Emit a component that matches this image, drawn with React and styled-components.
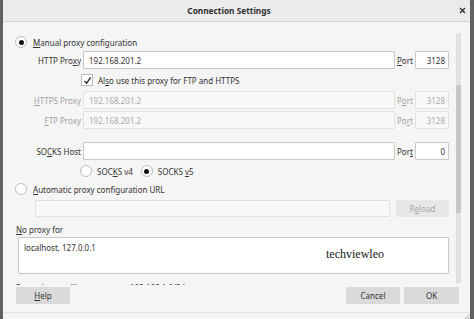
import React from 'react';
import styled, { createGlobalStyle } from 'styled-components';

const font = `"Noto Sans", "Open Sans", sans-serif`;

const GlobalStyle = createGlobalStyle`
  html, body {
    margin: 0;
    padding: 0;
    background: #5f5f5f;
  }
  * {
    box-sizing: border-box;
  }
`;

const Frame = styled.div`
  position: relative;
  width: 474px;
  height: 319px;
  display: flex;
  flex-direction: column;
  overflow: hidden;
  background: #f5f5f5;
  border-left: 3px solid #616161;
  border-right: 4px solid #616161;
  font-family: ${font};
  font-size: 8px;
  color: #333;
`;

const TitleBar = styled.div`
  display: flex;
  align-items: center;
  height: 22px;
  flex-shrink: 0;
  background: #ebebeb;
  border-bottom: 1px solid #d5d5d5;
`;

const Title = styled.div`
  flex: 1;
  text-align: center;
  font-weight: bold;
  font-size: 8.3px;
  color: #2e2e2e;
`;

const CloseBox = styled.div`
  width: 15px;
  display: flex;
  justify-content: center;
  padding-right: 1px;
`;

const ScrollArea = styled.div`
  display: flex;
  height: 263px;
  flex-shrink: 0;
  overflow: hidden;
`;

const Content = styled.div`
  flex: 1;
  display: flex;
  flex-direction: column;
  padding: 14px 7px 0 12px;
`;

const ScrollTrack = styled.div`
  width: 5px;
  margin: 11px 9px 2px 0;
  background: #e2e2e2;
  display: flex;
  flex-direction: column;
  padding-top: 52px;
`;

const ScrollThumb = styled.div`
  height: 128px;
  background: #c7c7c7;
`;

const OptionRow = styled.div`
  display: flex;
  align-items: center;
  gap: 6px;
  height: 14px;
  margin-top: ${(p) => p.$top ?? 0}px;
`;

const Radio = styled.span`
  width: 12px;
  height: 12px;
  border-radius: 50%;
  border: 1px solid #bdbdbd;
  background: #fff;
  display: flex;
  align-items: center;
  justify-content: center;
  flex-shrink: 0;

  &::after {
    content: '';
    width: 5px;
    height: 5px;
    border-radius: 50%;
    background: ${(p) => (p.$checked ? '#111' : 'transparent')};
  }
`;

const Check = styled.span`
  width: 12px;
  height: 12px;
  border: 1px solid #bdbdbd;
  background: #fff;
  display: flex;
  align-items: center;
  justify-content: center;
  flex-shrink: 0;
`;

const Mn = styled.span`
  text-decoration: underline;
  text-underline-offset: 1px;
`;

const FieldGrid = styled.div`
  display: grid;
  grid-template-columns: 66px 1fr 16px 34px;
  grid-auto-rows: 18px;
  column-gap: 2px;
  row-gap: 2px;
  margin-top: ${(p) => p.$top}px;
  align-items: center;
`;

const FieldLabel = styled.div`
  text-align: right;
  white-space: nowrap;
  color: ${(p) => (p.$disabled ? '#a3a3a3' : '#333')};
`;

const PortLabel = styled.div`
  white-space: nowrap;
  color: ${(p) => (p.$disabled ? '#a3a3a3' : '#333')};
`;

const TextInput = styled.input`
  width: 100%;
  height: ${(p) => p.$h ?? 18}px;
  margin: 0;
  padding: 0 ${(p) => (p.$right ? 3 : 5)}px;
  font-family: ${font};
  font-size: 8px;
  text-align: ${(p) => (p.$right ? 'right' : 'left')};
  color: #333;
  background: #fff;
  border: 1px solid #c9c9c9;
  border-radius: 1px;
  outline: none;

  &:disabled {
    color: #ababab;
    background: #f8f8f8;
    border-color: #e1e1e1;
  }
`;

const CheckCell = styled.div`
  grid-column: 2 / 5;
  display: flex;
  align-items: center;
  gap: 5px;
  margin-left: -2px;
  align-self: stretch;
`;

const VersionCell = styled.div`
  grid-column: 2 / 5;
  display: flex;
  align-items: center;
  gap: 8px;
  margin-left: -3px;
  height: 16px;
`;

const RadioOption = styled.div`
  display: flex;
  align-items: center;
  gap: 5px;
`;

const UrlRow = styled.div`
  display: flex;
  gap: 6px;
  height: 17px;
  margin-top: 5px;
  padding-left: 20px;
`;

const Button = styled.button`
  width: ${(p) => p.$w ?? 54}px;
  height: 17px;
  flex-shrink: 0;
  margin: 0;
  padding: 0;
  font-family: ${font};
  font-size: 8px;
  color: ${(p) => (p.disabled ? '#a9a9a9' : '#333')};
  background: ${(p) => (p.disabled ? '#e7e7e7' : '#dadada')};
  border: none;
  border-radius: 1px;
  margin-left: ${(p) => (p.$push ? 'auto' : '0')};
`;

const SectionLabel = styled.div`
  height: 14px;
  display: flex;
  align-items: center;
  margin-top: ${(p) => p.$top}px;
  padding-left: 1px;
  white-space: nowrap;
`;

const AreaWrap = styled.div`
  position: relative;
  margin: 2px 0 0 3px;
  height: 37px;
  flex-shrink: 0;
`;

const TextArea = styled.textarea`
  display: block;
  width: 100%;
  height: 100%;
  margin: 0;
  padding: 4px 5px;
  resize: none;
  font-family: ${font};
  font-size: 8px;
  color: #333;
  background: #fff;
  border: 1px solid #c9c9c9;
  border-radius: 1px;
  outline: none;
`;

const Watermark = styled.span`
  position: absolute;
  left: 308px;
  top: 10px;
  font-family: "Liberation Serif", "Times New Roman", serif;
  font-size: 12px;
  color: #151515;
  pointer-events: none;
`;

const Example = styled.div`
  margin-top: 8px;
  padding-left: 1px;
  white-space: nowrap;
  line-height: 11px;
  flex-shrink: 0;
`;

const ButtonBar = styled.div`
  flex: 1;
  display: flex;
  align-items: flex-start;
  gap: 4px;
  padding: 2px 11px 0 13px;
  border-bottom: 1px solid #e4e4e4;
  margin-bottom: 6px;
`;

const Grip = styled.svg`
  position: absolute;
  right: -4px;
  bottom: 0;
`;

const App = () => (
  <>
    <GlobalStyle />
    <Frame>
      <TitleBar>
        <Title>Connection Settings</Title>
        <CloseBox>
          <svg width="7" height="7" viewBox="0 0 7 7">
            <path d="M1 1 L6 6 M6 1 L1 6" stroke="#2e2e2e" strokeWidth="1.3" />
          </svg>
        </CloseBox>
      </TitleBar>

      <ScrollArea>
        <Content>
          <OptionRow>
            <Radio $checked />
            <span><Mn>M</Mn>anual proxy configuration</span>
          </OptionRow>

          <FieldGrid $top={3}>
            <FieldLabel>HTTP Pro<Mn>x</Mn>y</FieldLabel>
            <TextInput defaultValue="192.168.201.2" readOnly />
            <PortLabel><Mn>P</Mn>ort</PortLabel>
            <TextInput $right defaultValue="3128" readOnly />

            <CheckCell>
              <Check>
                <svg width="9" height="9" viewBox="0 0 9 9">
                  <path d="M1.5 5 L3.6 7.3 L7.6 1.3" fill="none" stroke="#222" strokeWidth="1.3" />
                </svg>
              </Check>
              <span>Al<Mn>s</Mn>o use this proxy for FTP and HTTPS</span>
            </CheckCell>

            <FieldLabel $disabled><Mn>H</Mn>TTPS Proxy</FieldLabel>
            <TextInput disabled defaultValue="192.168.201.2" />
            <PortLabel $disabled>P<Mn>o</Mn>rt</PortLabel>
            <TextInput $right disabled defaultValue="3128" />

            <FieldLabel $disabled><Mn>F</Mn>TP Proxy</FieldLabel>
            <TextInput disabled defaultValue="192.168.201.2" />
            <PortLabel $disabled>Po<Mn>r</Mn>t</PortLabel>
            <TextInput $right disabled defaultValue="3128" />
          </FieldGrid>

          <FieldGrid $top={13}>
            <FieldLabel>SO<Mn>C</Mn>KS Host</FieldLabel>
            <TextInput defaultValue="" readOnly />
            <PortLabel>Por<Mn>t</Mn></PortLabel>
            <TextInput $right defaultValue="0" readOnly />

            <VersionCell>
              <RadioOption>
                <Radio />
                <span>SOC<Mn>K</Mn>S v4</span>
              </RadioOption>
              <RadioOption>
                <Radio $checked />
                <span>SOCKS <Mn>v</Mn>5</span>
              </RadioOption>
            </VersionCell>
          </FieldGrid>

          <OptionRow $top={3}>
            <Radio />
            <span><Mn>A</Mn>utomatic proxy configuration URL</span>
          </OptionRow>

          <UrlRow>
            <TextInput $h={17} disabled defaultValue="" />
            <Button $w={53} disabled>R<Mn>e</Mn>load</Button>
          </UrlRow>

          <SectionLabel $top={7}><Mn>N</Mn>o proxy for</SectionLabel>
          <AreaWrap>
            <TextArea readOnly defaultValue="localhost, 127.0.0.1" />
            <Watermark>techviewleo</Watermark>
          </AreaWrap>
          <Example>Example: .mozilla.org, .net.nz, 192.168.1.0/24</Example>
        </Content>
        <ScrollTrack>
          <ScrollThumb />
        </ScrollTrack>
      </ScrollArea>

      <ButtonBar>
        <Button><Mn>H</Mn>elp</Button>
        <Button $push>Cancel</Button>
        <Button $w={55}>OK</Button>
      </ButtonBar>

      <Grip width="10" height="10" viewBox="0 0 10 10">
        <path d="M10 1 L1 10 M10 4 L4 10 M10 7 L7 10" stroke="#9a9a9a" strokeWidth="0.8" />
      </Grip>
    </Frame>
  </>
);

export default App;
